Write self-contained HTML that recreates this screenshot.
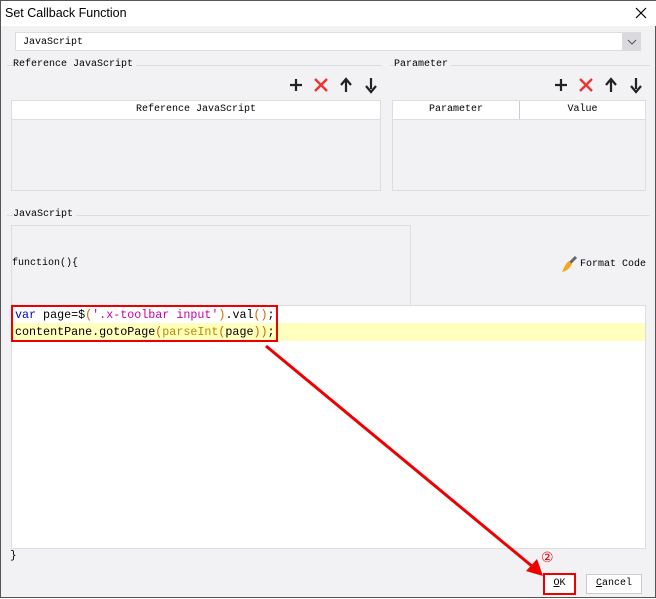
<!DOCTYPE html><html><head><style>
body{margin:0;width:656px;height:598px;overflow:hidden;font-family:"Liberation Mono",monospace;font-size:10px;color:#000}
#d{position:absolute;left:0;top:0;width:654px;height:596px;border:1px solid #555;background:#f2f2f5}
.a{position:absolute}
.tb{background:#fff;border:1px solid #ddd}
.th{background:#fff;border-bottom:1px solid #ddd;height:18px;line-height:18px;text-align:center}
</style></head><body><div id="d">
<div class="a" style="left:0;top:0;width:654px;height:25px;background:#fff;font-family:'Liberation Sans',sans-serif;font-size:12.5px;line-height:25px;padding-left:4px">Set Callback Function</div>
<svg class="a" style="left:634px;top:6px" width="12" height="12"><path d="M1 1L11 11M11 1L1 11" stroke="#000" stroke-width="1.2"/></svg>
<div class="a tb" style="left:14px;top:31px;width:626px;height:19px;line-height:19px;padding-left:7px;box-sizing:border-box">JavaScript</div>
<div class="a" style="left:621px;top:32px;width:19px;height:18px;background:#dadade"></div>
<svg class="a" style="left:626px;top:38px" width="10" height="6"><path d="M1 1L5 5L9 1" stroke="#555" fill="none"/></svg>
<div class="a" style="left:6px;top:64px;width:375px;border-top:1px solid #ddd"></div>
<div class="a" style="left:12px;top:58px;background:#f2f2f5;padding-right:3px">Reference JavaScript</div>
<div class="a" style="left:389px;top:64px;width:260px;border-top:1px solid #ddd"></div>
<div class="a" style="left:393px;top:58px;background:#f2f2f5;padding-right:3px">Parameter</div>
<svg class="a" style="left:0;top:0" width="656" height="100">
<g id="ic">
<path d="M289 84h12M295 78v12" stroke="#222" stroke-width="2.2"/>
<path d="M314 78l12 12M326 78l-12 12" stroke="#e33" stroke-width="2.4"/>
<path d="M345 91v-11M340 84l5-6 5 6" stroke="#222" stroke-width="2.2" fill="none"/>
<path d="M370 77v11M365 85l5 6 5-6" stroke="#222" stroke-width="2.2" fill="none"/>
</g>
<use href="#ic" x="265"/>
</svg>
<div class="a" style="left:10px;top:99px;width:370px;height:91px;border:1px solid #ddd;box-sizing:border-box"><div class="th">Reference JavaScript</div></div>
<div class="a" style="left:391px;top:99px;width:254px;height:91px;border:1px solid #ddd;box-sizing:border-box"><div class="th" style="display:flex"><div style="width:126px;border-right:1px solid #ccc">Parameter</div><div style="flex:1">Value</div></div></div>
<div class="a" style="left:6px;top:214px;width:643px;border-top:1px solid #ddd"></div>
<div class="a" style="left:12px;top:208px;background:#f2f2f5;padding-right:3px">JavaScript</div>
<div class="a" style="left:10px;top:224px;width:400px;height:81px;border:1px solid #ddd;box-sizing:border-box"></div>
<div class="a" style="left:11px;top:257px">function(){</div>
<svg class="a" style="left:559px;top:254px" width="18" height="18"><path d="M10 8L16 2" stroke="#666" stroke-width="3"/><path d="M9 6L12 9C10 13 7 16 2 17C4 13 5 9 9 6Z" fill="#f0a820"/></svg>
<div class="a" style="left:579px;top:258px">Format Code</div>
<div class="a" style="left:10px;top:304px;width:635px;height:244px;background:#fff;border:1px solid #ddd;box-sizing:border-box"></div>
<div class="a" style="left:11px;top:322px;width:633px;height:18px;background:#ffffbe"></div>
<div class="a" style="left:14px;top:306px;font-size:11.7px;line-height:17px;white-space:pre"><span style="color:#00c">var</span> page=$<span style="color:#c60">(</span><span style="color:#c0a">'.x-toolbar input'</span><span style="color:#c60">)</span>.val<span style="color:#c60">()</span>;
contentPane.gotoPage<span style="color:#c60">(</span><span style="color:#b80">parseInt</span><span style="color:#c60">(</span>page<span style="color:#c60">))</span>;</div>
<div class="a" style="left:10px;top:304px;width:267px;height:37px;border:2px solid #e00;box-sizing:border-box"></div>
<div class="a" style="left:9px;top:549px;font-size:11px">}</div>
<svg class="a" style="left:0;top:0" width="656" height="598"><line x1="265" y1="345" x2="532" y2="566" stroke="#e00" stroke-width="3"/><polygon points="542,575 525,570 536,558" fill="#e00"/></svg>
<div class="a" style="left:540px;top:548px;color:#e00;font-family:'Liberation Sans',sans-serif;font-size:14px">②</div>
<div class="a" style="left:585px;top:573px;width:56px;height:20px;background:#fff;border:1px solid #ccc;box-sizing:border-box;text-align:center;line-height:18px"><u>C</u>ancel</div>
<div class="a" style="left:542px;top:572px;width:33px;height:22px;background:#fff;border:2px solid #e00;box-sizing:border-box;text-align:center;line-height:18px"><u>O</u>K</div>
</div></body></html>
